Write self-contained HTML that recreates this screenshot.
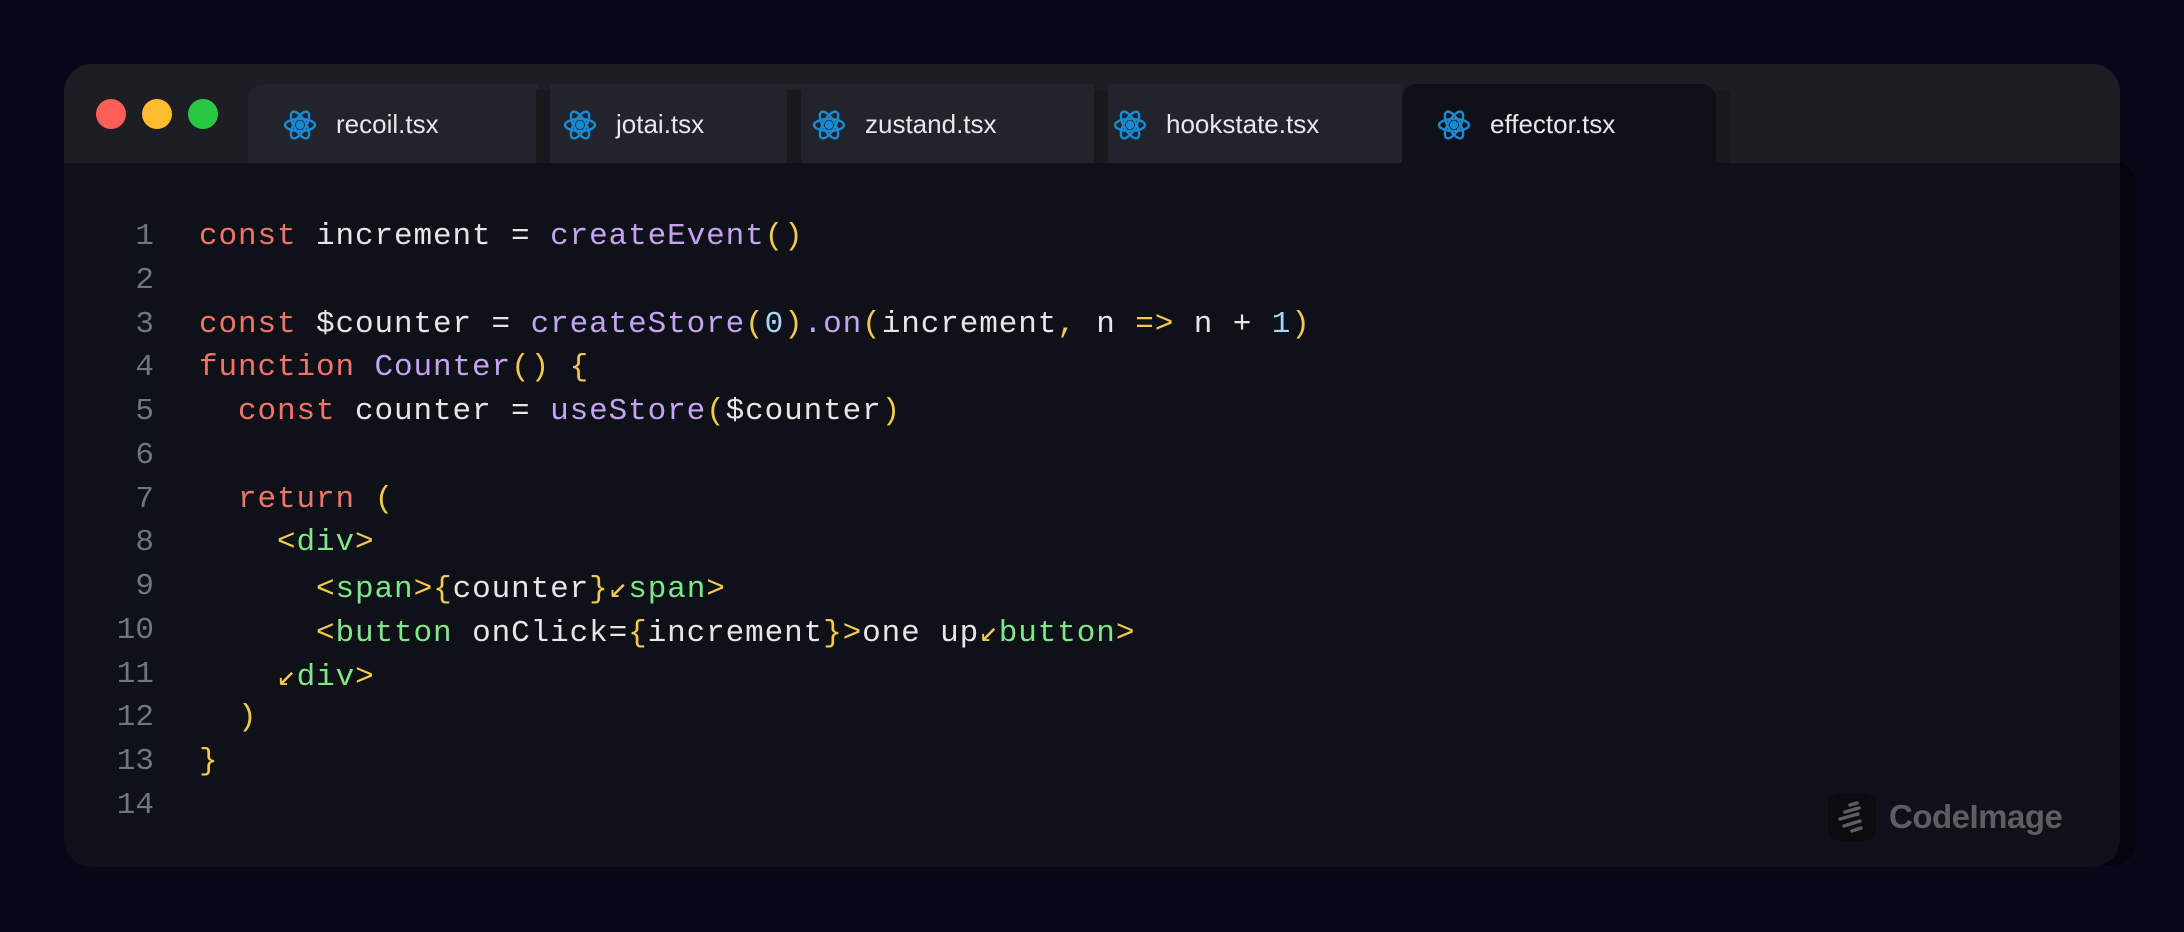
<!DOCTYPE html>
<html><head><meta charset="utf-8"><style>
*{margin:0;padding:0;box-sizing:border-box}
body{width:2184px;height:932px;background:#08081a;position:relative;overflow:hidden;font-family:"Liberation Sans",sans-serif}
.shadow{position:absolute;left:80px;top:160px;width:2056px;height:705px;background:#04040f;border-radius:24px}
.win{position:absolute;left:64px;top:64px;width:2056px;height:803px;background:#0e1117;border-radius:28px;overflow:hidden}
.head{position:absolute;left:0;top:0;width:100%;height:99px;background:#1c1e24}
.dot{position:absolute;top:35px;width:30px;height:30px;border-radius:50%}
.tab{position:absolute;top:20px;height:79px;background:#21242b;color:#e8e8ea;font-size:26px;display:flex;align-items:center;padding-top:2px}
.tab svg{margin:0 18px 0 34px}
.sep{position:absolute;top:26px;height:73px;width:14px;background:#18191d}
.code{position:absolute;left:0;top:5px;font-family:"Liberation Mono",monospace;font-size:31px;letter-spacing:0.9px;white-space:pre;color:#e6e6e6}
.ln{position:absolute;width:90px;text-align:right;color:#6e7681;left:0;letter-spacing:0}
.cl{position:absolute;left:135px}
.k{color:#f2736a}.f{color:#c6a2f2}.b{color:#f3c84f}.n{color:#a5d6ff}.t{color:#7ee787}.y{color:#f3c84f}
.wm{position:absolute;display:flex;align-items:center}
.wm .ic{width:48px;height:48px;background:#0a0c0f;border-radius:12px;position:relative}
.wm span{font-weight:bold;font-size:33px;color:#5c5e63;margin-left:13px;letter-spacing:-0.5px}
</style></head><body>
<div class="shadow"></div>
<div class="win">
<div class="head"></div>
<div class="dot" style="left:32px;background:#ff5f57"></div>
<div class="dot" style="left:78px;background:#febc2e"></div>
<div class="dot" style="left:124px;background:#28c840"></div>
<div class="tab" style="left:184px;width:290px;border-radius:16px 0 0 0"><svg width="36" height="36" viewBox="-12 -12 24 24" fill="none" stroke="#1a8ad4" stroke-width="1.6"><ellipse rx="10" ry="4"/><ellipse rx="10" ry="4" transform="rotate(60)"/><ellipse rx="10" ry="4" transform="rotate(120)"/><circle r="2" fill="#1a8ad4"/></svg>recoil.tsx</div>
<div class="sep" style="left:472px"></div>
<div class="tab" style="left:486px;width:252px"><svg width="36" height="36" viewBox="-12 -12 24 24" fill="none" stroke="#1a8ad4" stroke-width="1.6" style="margin-left:12px"><ellipse rx="10" ry="4"/><ellipse rx="10" ry="4" transform="rotate(60)"/><ellipse rx="10" ry="4" transform="rotate(120)"/><circle r="2" fill="#1a8ad4"/></svg>jotai.tsx</div>
<div class="sep" style="left:723px"></div>
<div class="tab" style="left:737px;width:293px"><svg width="36" height="36" viewBox="-12 -12 24 24" fill="none" stroke="#1a8ad4" stroke-width="1.6" style="margin-left:10px"><ellipse rx="10" ry="4"/><ellipse rx="10" ry="4" transform="rotate(60)"/><ellipse rx="10" ry="4" transform="rotate(120)"/><circle r="2" fill="#1a8ad4"/></svg>zustand.tsx</div>
<div class="sep" style="left:1030px"></div>
<div class="tab" style="left:1044px;width:294px"><svg width="36" height="36" viewBox="-12 -12 24 24" fill="none" stroke="#1a8ad4" stroke-width="1.6" style="margin-left:4px"><ellipse rx="10" ry="4"/><ellipse rx="10" ry="4" transform="rotate(60)"/><ellipse rx="10" ry="4" transform="rotate(120)"/><circle r="2" fill="#1a8ad4"/></svg>hookstate.tsx</div>
<div class="tab" style="left:1338px;width:314px;background:#0e1117;border-radius:14px 14px 0 0"><svg width="36" height="36" viewBox="-12 -12 24 24" fill="none" stroke="#1a8ad4" stroke-width="1.6" style="margin-left:34px"><ellipse rx="10" ry="4"/><ellipse rx="10" ry="4" transform="rotate(60)"/><ellipse rx="10" ry="4" transform="rotate(120)"/><circle r="2" fill="#1a8ad4"/></svg>effector.tsx</div>
<div class="sep" style="left:1652px;width:14px"></div>
</div>
<div class="code">
<div class="ln" style="top:214px;left:64px">1</div>
<div class="ln" style="top:258px;left:64px">2</div>
<div class="ln" style="top:302px;left:64px">3</div>
<div class="ln" style="top:345px;left:64px">4</div>
<div class="ln" style="top:389px;left:64px">5</div>
<div class="ln" style="top:433px;left:64px">6</div>
<div class="ln" style="top:477px;left:64px">7</div>
<div class="ln" style="top:520px;left:64px">8</div>
<div class="ln" style="top:564px;left:64px">9</div>
<div class="ln" style="top:608px;left:64px">10</div>
<div class="ln" style="top:652px;left:64px">11</div>
<div class="ln" style="top:695px;left:64px">12</div>
<div class="ln" style="top:739px;left:64px">13</div>
<div class="ln" style="top:783px;left:64px">14</div>
<div class="cl" style="top:214px;left:199px"><span class="k">const</span> increment = <span class="f">createEvent</span><span class="b">()</span></div>
<div class="cl" style="top:302px;left:199px"><span class="k">const</span> $counter = <span class="f">createStore</span><span class="b">(</span><span class="n">0</span><span class="b">)</span><span class="f">.on</span><span class="b">(</span>increment<span class="y">,</span> n <span class="y">=&gt;</span> n + <span class="n">1</span><span class="b">)</span></div>
<div class="cl" style="top:345px;left:199px"><span class="k">function</span> <span class="f">Counter</span><span class="b">()</span> <span class="b">{</span></div>
<div class="cl" style="top:389px;left:199px">  <span class="k">const</span> counter = <span class="f">useStore</span><span class="b">(</span>$counter<span class="b">)</span></div>
<div class="cl" style="top:477px;left:199px">  <span class="k">return</span> <span class="b">(</span></div>
<div class="cl" style="top:520px;left:199px">    <span class="y">&lt;</span><span class="t">div</span><span class="y">&gt;</span></div>
<div class="cl" style="top:564px;left:199px">      <span class="y">&lt;</span><span class="t">span</span><span class="y">&gt;{</span>counter<span class="y">}↙</span><span class="t">span</span><span class="y">&gt;</span></div>
<div class="cl" style="top:608px;left:199px">      <span class="y">&lt;</span><span class="t">button</span> onClick=<span class="y">{</span>increment<span class="y">}&gt;</span>one up<span class="y">↙</span><span class="t">button</span><span class="y">&gt;</span></div>
<div class="cl" style="top:652px;left:199px">    <span class="y">↙</span><span class="t">div</span><span class="y">&gt;</span></div>
<div class="cl" style="top:695px;left:199px">  <span class="b">)</span></div>
<div class="cl" style="top:739px;left:199px"><span class="b">}</span></div>
</div>
<div class="wm" style="left:1828px;top:793px"><div class="ic"><svg width="48" height="48" viewBox="0 0 48 48" stroke="#5c5e63" stroke-width="3.5" stroke-linecap="round"><line x1="22" y1="12" x2="29" y2="10"/><line x1="17" y1="19" x2="31" y2="15"/><line x1="12" y1="26" x2="30" y2="21"/><line x1="16" y1="33" x2="32" y2="28"/><line x1="24" y1="38" x2="33" y2="35"/></svg></div><span>CodeImage</span></div>
</body></html>
